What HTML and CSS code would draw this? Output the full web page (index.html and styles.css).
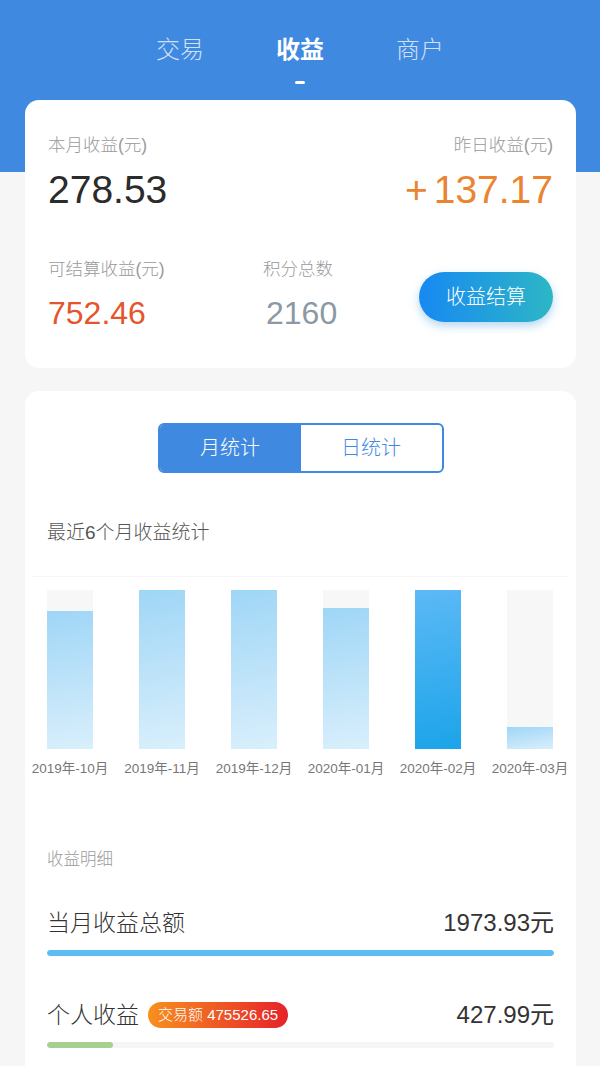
FILE: index.html
```html
<!DOCTYPE html>
<html lang="zh-CN">
<head>
    <meta charset="UTF-8">
    <meta name="viewport" content="width=device-width, initial-scale=1.0">
    <title>收益</title>
    <link rel="stylesheet" href="styles.css">
</head>
<body>
    <div class="header">
        <div class="tabs">
            <div class="tab">交易</div>
            <div class="tab active">收益</div>
            <div class="tab">商户</div>
        </div>
    </div>

    <div class="page">
        <!-- summary card -->
        <div class="card summary">
            <div class="row">
                <div class="cell">
                    <p class="label">本月收益(元)</p>
                    <p class="big dark">278.53</p>
                </div>
                <div class="cell right">
                    <p class="label">昨日收益(元)</p>
                    <p class="big orange">+ 137.17</p>
                </div>
            </div>
            <div class="row lower">
                <div class="cell">
                    <p class="label">可结算收益(元)</p>
                    <p class="mid red">752.46</p>
                </div>
                <div class="cell points">
                    <p class="label">积分总数</p>
                    <p class="mid grey">2160</p>
                </div>
                <div class="cell right">
                    <div class="settle-btn">收益结算</div>
                </div>
            </div>
        </div>

        <!-- statistics card -->
        <div class="card stats">
            <div class="switch">
                <div class="switch-item on">月统计</div>
                <div class="switch-item">日统计</div>
            </div>

            <p class="section-title">最近6个月收益统计</p>

            <div class="chart">
                <div class="bar-col">
                    <div class="bar"><div class="fill" style="height: 87%"></div></div>
                    <span class="bar-label">2019年-10月</span>
                </div>
                <div class="bar-col">
                    <div class="bar"><div class="fill" style="height: 100%"></div></div>
                    <span class="bar-label">2019年-11月</span>
                </div>
                <div class="bar-col">
                    <div class="bar"><div class="fill" style="height: 100%"></div></div>
                    <span class="bar-label">2019年-12月</span>
                </div>
                <div class="bar-col">
                    <div class="bar"><div class="fill" style="height: 89%"></div></div>
                    <span class="bar-label">2020年-01月</span>
                </div>
                <div class="bar-col">
                    <div class="bar"><div class="fill current" style="height: 100%"></div></div>
                    <span class="bar-label">2020年-02月</span>
                </div>
                <div class="bar-col">
                    <div class="bar"><div class="fill" style="height: 14%"></div></div>
                    <span class="bar-label">2020年-03月</span>
                </div>
            </div>

            <p class="detail-title">收益明细</p>

            <div class="detail">
                <div class="detail-row">
                    <span class="detail-name">当月收益总额</span>
                    <span class="detail-value">1973.93元</span>
                </div>
                <div class="progress"><div class="progress-fill blue" style="width: 100%"></div></div>
            </div>

            <div class="detail">
                <div class="detail-row">
                    <span class="detail-name">个人收益 <span class="badge">交易额 475526.65</span></span>
                    <span class="detail-value">427.99元</span>
                </div>
                <div class="progress"><div class="progress-fill green" style="width: 13%"></div></div>
            </div>
        </div>
    </div>
</body>
</html>
```

FILE: styles.css
```css
body {
    margin: 0;
    padding: 0;
    background: #f6f6f6;
    font-family: "Liberation Sans", "Noto Sans CJK SC", sans-serif;
    color: #333;
    overflow: hidden;
}

p {
    margin: 0;
}

.header {
    background: #3f8ae0;
    height: 172px;
}

.tabs {
    display: flex;
    justify-content: center;
    gap: 72px;
    padding-top: 34px;
}

.tab {
    position: relative;
    font-size: 24px;
    line-height: 32px;
    font-weight: 300;
    color: rgba(255, 255, 255, 0.75);
}

.tab.active {
    color: #fff;
    font-weight: bold;
}

/* small dash under the active tab */
.tab.active::after {
    content: "";
    position: absolute;
    left: 50%;
    top: 47px;
    width: 10px;
    height: 3px;
    margin-left: -5px;
    background: #fff;
    border-radius: 2px;
}

.page {
    margin-top: -72px;
    padding: 0 24px 0 25px;
}

.card {
    background: #fff;
    border-radius: 14px;
}

.summary {
    height: 268px;
    box-sizing: border-box;
    padding: 33px 23px 0 23px;
    margin-bottom: 23px;
}

.row {
    display: flex;
    justify-content: space-between;
}

.row.lower {
    margin-top: 45px;
    align-items: flex-start;
}

.cell.right {
    text-align: right;
}

.cell.points {
    flex: 1;
    padding-left: 92px;
}

.lower .cell:first-child {
    width: 123px;
}

.label {
    font-size: 17.5px;
    line-height: 24px;
    font-weight: 300;
    color: #9a9a9a;
}

.big {
    font-size: 39px;
    line-height: 44px;
    margin-top: 11px;
}

.mid {
    font-size: 32px;
    line-height: 40px;
    margin-top: 12px;
}

.dark { color: #2b2b2b; }
.orange { color: #ea8430; word-spacing: -5px; }
.red { color: #e5552c; }
.grey { color: #8a99a5; padding-left: 3px; }

.settle-btn {
    margin-top: 15px;
    width: 134px;
    height: 50px;
    line-height: 50px;
    border-radius: 25px;
    text-align: center;
    font-size: 20px;
    font-weight: 300;
    color: #fff;
    background: linear-gradient(90deg, #1789f2, #2db6c6);
    box-shadow: 0 4px 10px rgba(40, 140, 220, 0.35);
}

.stats {
    padding: 32px 22px 30px 22px;
    min-height: 700px;
}

.switch {
    display: flex;
    width: 286px;
    height: 50px;
    margin: 0 auto;
    box-sizing: border-box;
    border: 2px solid #3f8ae0;
    border-radius: 6px;
    overflow: hidden;
}

.switch-item {
    flex: 1;
    text-align: center;
    line-height: 46px;
    font-size: 20px;
    font-weight: 300;
    color: #3f8ae0;
}

.switch-item.on {
    background: #3f8ae0;
    color: #fff;
}

.section-title {
    margin-top: 46px;
    font-size: 19px;
    line-height: 28px;
    font-weight: 300;
    color: #555;
}

.chart {
    display: flex;
    justify-content: space-between;
    margin: 29px -14px 0 -15px;
    padding-top: 13px;
    border-top: 1px solid #f7f7f7;
}

.bar-col {
    width: 76px;
    display: flex;
    flex-direction: column;
    align-items: center;
}

.bar {
    width: 46px;
    height: 159px;
    background: #f7f7f7;
    display: flex;
    align-items: flex-end;
}

.fill {
    width: 100%;
    background: linear-gradient(170deg, #9fd6f6, #d9effc);
}

.fill.current {
    background: linear-gradient(170deg, #5cb9f6, #1ca4e9);
}

.bar-label {
    margin-top: 8px;
    font-size: 13.5px;
    color: #777;
    white-space: nowrap;
}

.detail-title {
    margin-top: 70px;
    font-size: 16.5px;
    line-height: 24px;
    font-weight: 300;
    color: #9a9a9a;
}

.detail {
    margin-top: 37px;
}

.detail + .detail {
    margin-top: 44px;
}

.detail-row {
    display: flex;
    justify-content: space-between;
    align-items: center;
    font-size: 23px;
    line-height: 30px;
    color: #333;
}

.detail-value {
    font-size: 24px;
}

.detail-name {
    display: flex;
    align-items: center;
    font-weight: 300;
}

.badge {
    margin-left: 9px;
    height: 26px;
    line-height: 26px;
    padding: 0 10px;
    border-radius: 13px;
    font-size: 15px;
    color: #fff;
    background: linear-gradient(90deg, #f7901e, #e6222a);
}

.progress {
    margin-top: 12px;
    height: 6px;
    border-radius: 3px;
    background: #f5f5f5;
    overflow: hidden;
}

.progress-fill {
    height: 100%;
    border-radius: 3px;
}

.progress-fill.blue { background: #5dbdf0; }
.progress-fill.green { background: #a7cf92; }
```
